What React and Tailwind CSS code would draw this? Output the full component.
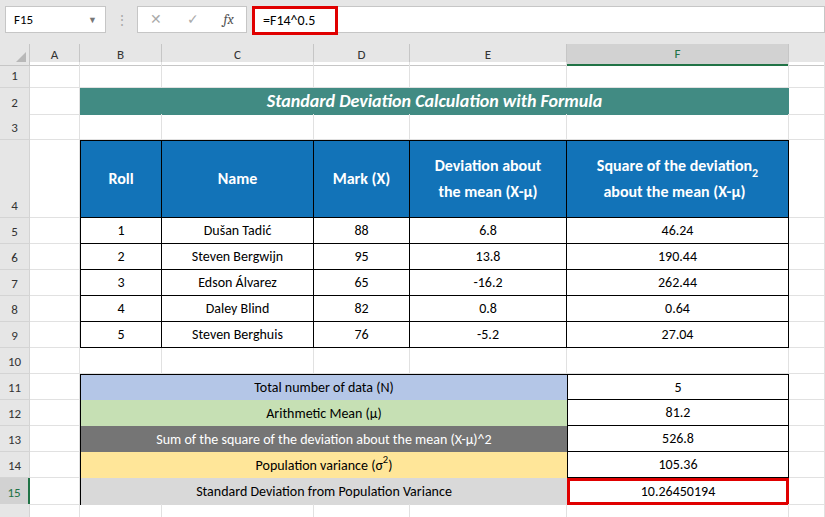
import React from 'react';

const cols = 'grid grid-cols-[30px_50px_82px_152px_96px_157px_222px_36px]';
const font = { fontFamily: 'Calibri, Carlito, "Open Sans", "Liberation Sans", sans-serif' };

const people = [
  ['1', 'Dušan Tadić', '88', '6.8', '46.24'],
  ['2', 'Steven Bergwijn', '95', '13.8', '190.44'],
  ['3', 'Edson Álvarez', '65', '-16.2', '262.44'],
  ['4', 'Daley Blind', '82', '0.8', '0.64'],
  ['5', 'Steven Berghuis', '76', '-5.2', '27.04'],
];

const summary = [
  ['Total number of data (N)', '5', 'bg-[#b4c6e7] text-black'],
  ['Arithmetic Mean (µ)', '81.2', 'bg-[#c6e0b4] text-black'],
  ['Sum of the square of the deviation about the mean (X-µ)^2', '526.8', 'bg-[#757575] text-white'],
  [<>Population variance (σ<sup>2</sup>)</>, '105.36', 'bg-[#ffe699] text-black'],
  ['Standard Deviation from Population Variance', '10.26450194', 'bg-[#d9d9d9] text-black'],
];

function RowNum({ n, active }) {
  return (
    <div className={`flex items-end justify-center pb-0.5 text-[13px] border-b border-r border-[#d4d4d4] ${active ? 'bg-[#d2d2d2] text-[#217346] border-r-2 border-r-[#217346]' : 'bg-[#e6e6e6] text-[#333]'}`}>{n}</div>
  );
}

function Empty() {
  return <div className="border-r border-b border-[#e1e1e1]" />;
}

export default function App() {
  return (
    <div className="w-[825px] h-[517px] bg-white overflow-hidden text-[14px]" style={font}>
      {/* formula bar */}
      <div className="h-[44px] bg-[#e6e6e6] flex items-start pt-[6px] gap-0">
        <div className="ml-[5px] w-[101px] h-[27px] bg-white border border-[#c6c6c6] flex items-center justify-between px-2 text-[13px]">
          <span>F15</span><span className="text-[#777] text-[9px]">▼</span>
        </div>
        <div className="w-[31px] text-center text-[#aaa] pt-1">⋮</div>
        <div className="w-[110px] h-[27px] bg-white border border-[#c6c6c6] flex items-center justify-around text-[#aaa]">
          <span>✕</span><span>✓</span><span className="italic text-[#555] font-serif">fx</span>
        </div>
        <div className="flex-1 h-[27px] bg-white border border-[#c6c6c6] ml-[5px] relative">
          <div className="absolute -left-[1px] -top-[1px] w-[86px] h-[29px] border-[3px] border-[#e00000] flex items-center pl-2 text-[14px]">=F14^0.5</div>
        </div>
      </div>
      {/* column headers */}
      <div className={`${cols} h-[18px] bg-[#e6e6e6] text-[13px] text-[#333]`}>
        <div className="border-r border-b border-[#c6c6c6] relative"><div className="absolute right-[3px] bottom-[3px] w-0 h-0 border-l-[10px] border-l-transparent border-b-[10px] border-b-[#b8b8b8]" /></div>
        {['A', 'B', 'C', 'D', 'E'].map(c => <div key={c} className="border-r border-b border-[#c6c6c6] flex items-center justify-center">{c}</div>)}
        <div className="border-r border-[#c6c6c6] border-b-2 border-b-[#217346] bg-[#d2d2d2] flex items-center justify-center text-[#217346]">F</div>
        <div className="border-b border-[#c6c6c6]" />
      </div>
      {/* row 1 */}
      <div className={`${cols} h-[26px]`}><RowNum n="1" />{Array.from({ length: 7 }).map((_, i) => <Empty key={i} />)}</div>
      {/* row 2 title */}
      <div className={`${cols} h-[26px]`}>
        <RowNum n="2" /><Empty />
        <div className="col-span-5 bg-[#418b83] text-white font-bold italic text-[18px] flex items-center justify-center">Standard Deviation Calculation with Formula</div>
        <Empty />
      </div>
      <div className={`${cols} h-[26px]`}><RowNum n="3" />{Array.from({ length: 7 }).map((_, i) => <Empty key={i} />)}</div>
      {/* header row 4 */}
      <div className={`${cols} h-[78px]`}>
        <RowNum n="4" /><Empty />
        {['Roll', 'Name', 'Mark (X)', <>Deviation about<br />the mean (X-µ)</>, <>Square of the deviation<br />about the mean (X-µ)<sup>2</sup></>].map((h, i) => (
          <div key={i} className={`bg-[#1273b8] text-white font-bold text-[16px] leading-[26px] flex items-center justify-center text-center border-t border-b border-r border-black ${i === 0 ? 'border-l' : ''}`}>{h}</div>
        ))}
        <Empty />
      </div>
      {people.map((p, r) => (
        <div key={r} className={`${cols} h-[26px]`}>
          <RowNum n={String(r + 5)} /><Empty />
          {p.map((v, i) => (
            <div key={i} className={`flex items-center justify-center border-b border-r border-black ${i === 0 ? 'border-l' : ''}`}>{v}</div>
          ))}
          <Empty />
        </div>
      ))}
      <div className={`${cols} h-[26px]`}><RowNum n="10" />{Array.from({ length: 7 }).map((_, i) => <Empty key={i} />)}</div>
      {summary.map(([label, val, cls], r) => (
        <div key={r} className={`${cols} h-[26px]`}>
          <RowNum n={String(r + 11)} active={r === 4} /><Empty />
          <div className={`col-span-4 flex items-center justify-center border-l border-black ${r === 0 ? 'border-t' : ''} ${cls}`}>{label}</div>
          {r === 4 ? (
            <div className="flex items-center justify-center border-[3px] border-[#e00000] bg-white">{val}</div>
          ) : (
            <div className={`flex items-center justify-center border-l border-r border-b border-black bg-white ${r === 0 ? 'border-t' : ''}`}>{val}</div>
          )}
          <Empty />
        </div>
      ))}
      <div className={`${cols} h-[20px]`}><div className="bg-[#e6e6e6] border-r border-[#d4d4d4]" />{Array.from({ length: 7 }).map((_, i) => <div key={i} className="border-r border-[#e1e1e1]" />)}</div>
    </div>
  );
}
